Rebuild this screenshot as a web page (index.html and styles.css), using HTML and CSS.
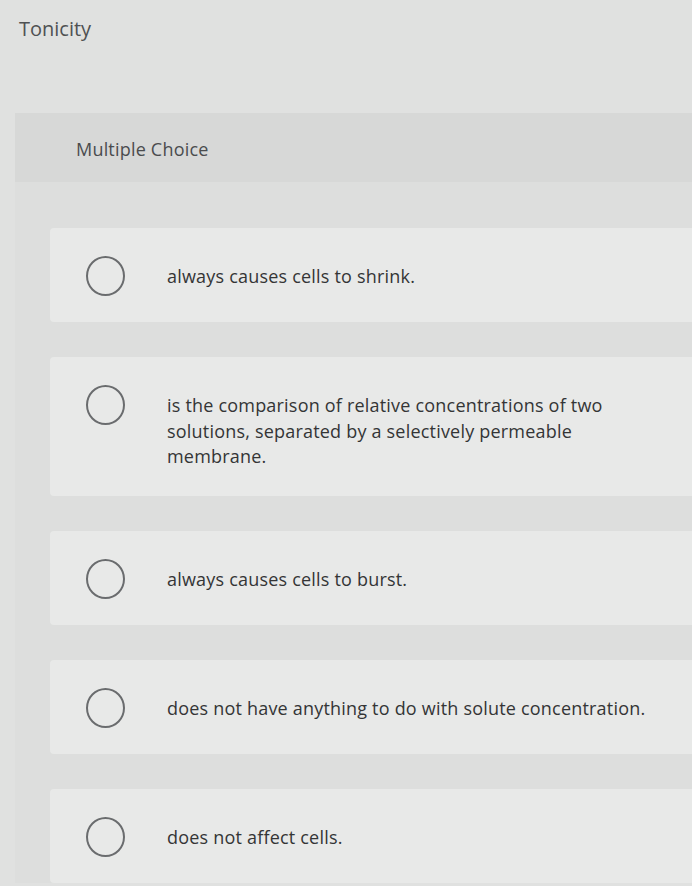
FILE: index.html
```html
<!DOCTYPE html>
<html lang="en">
<head>
<meta charset="utf-8">
<title>Tonicity</title>
<link rel="stylesheet" href="styles.css">
</head>
<body>
<header class="page-title">Tonicity</header>
<section class="panel">
  <div class="panel-head">Multiple Choice</div>
  <div class="options">
    <label class="option">
      <span class="radio"></span>
      <span class="option-text">always causes cells to shrink.</span>
    </label>
    <label class="option">
      <span class="radio"></span>
      <span class="option-text">is the comparison of relative concentrations of two solutions, separated by a selectively permeable membrane.</span>
    </label>
    <label class="option">
      <span class="radio"></span>
      <span class="option-text">always causes cells to burst.</span>
    </label>
    <label class="option">
      <span class="radio"></span>
      <span class="option-text">does not have anything to do with solute concentration.</span>
    </label>
    <label class="option">
      <span class="radio"></span>
      <span class="option-text">does not affect cells.</span>
    </label>
  </div>
</section>
</body>
</html>
```
FILE: styles.css
```css
html, body {
  margin: 0;
  padding: 0;
}
body {
  background: #e0e1e0;
  font-family: "Open Sans", "Noto Sans", "Liberation Sans", sans-serif;
  color: #3a3b3c;
  height: 886px;
  overflow: hidden;
}
.page-title {
  font-size: 20px;
  line-height: 24px;
  color: #4f5153;
  padding: 17px 0 0 19px;
  height: 96px;
  box-sizing: border-box;
}
.panel {
  margin-top: 17px;
  margin-left: 15px;
  background: #dddedd;
}
.panel-head {
  height: 69px;
  box-sizing: border-box;
  padding: 24px 0 0 61px;
  font-size: 18px;
  letter-spacing: 0.2px;
  line-height: 24px;
  color: #4a4c4e;
  background: #d7d8d7;
}
.options {
  display: flex;
  flex-direction: column;
  gap: 35px;
  padding: 46px 0 0 35px;
}
.option {
  display: flex;
  align-items: flex-start;
  gap: 42px;
  padding: 28px 20px 26px 36px;
  background: #e8e9e8;
  border-radius: 4px 0 0 4px;
}
.radio {
  flex: none;
  width: 39px;
  height: 40px;
  box-sizing: border-box;
  border: 2px solid #6a6c6e;
  border-radius: 50%;
}
.option-text {
  margin-top: 8px;
  font-size: 18px;
  letter-spacing: 0.2px;
  line-height: 25.5px;
  color: #343536;
  max-width: 492px;
}
```
